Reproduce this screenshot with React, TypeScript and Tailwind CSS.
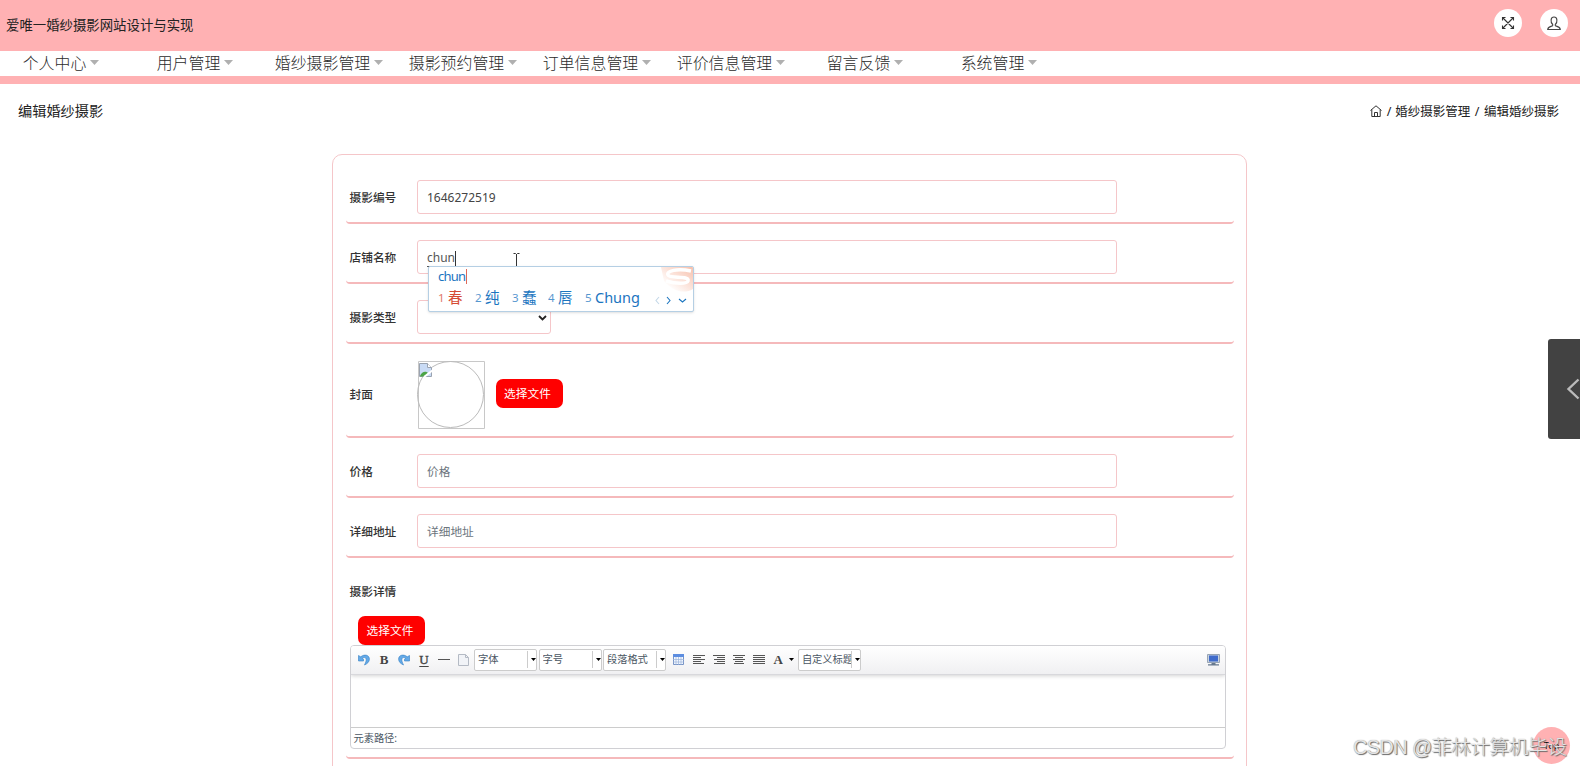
import React from "react";

const NAV = ["个人中心", "用户管理", "婚纱摄影管理", "摄影预约管理", "订单信息管理", "评价信息管理", "留言反馈", "系统管理"];

function Row({ label, className, children }: { label: string; className: string; children: React.ReactNode }) {
  return (
    <div className={`box-border flex rounded-[4px] border-b-2 border-[#f5b9bb] pb-[7px] pl-[3.500px] ${className}`}>
      <label className="w-[67.500px] shrink-0 self-center text-[11.700px] font-medium text-[#333]">{label}</label>
      {children}
    </div>
  );
}

function Field({ children, className = "" }: { children?: React.ReactNode; className?: string }) {
  return (
    <div className={`flex h-[34px] w-[700px] shrink-0 items-center rounded-[3px] border border-[#f5c6c9] bg-white pl-[9px] pr-[10px] pt-[2px] text-[12px] ${className}`}>
      {children}
    </div>
  );
}

function FileButton({ className = "" }: { className?: string }) {
  return (
    <button className={`h-[29px] w-[67px] shrink-0 rounded-[7px] bg-[#ff0000] pr-[3px] text-center text-[11.700px] leading-[29px] text-white ${className}`}>选择文件</button>
  );
}

function Combo({ text }: { text: string }) {
  return (
    <div className="mr-[1.500px] flex h-[22px] w-[63px] shrink-0 items-center rounded-[2px] border border-[#ccc] bg-white">
      <span className="ml-[3px] w-[49px] overflow-hidden whitespace-nowrap text-[10.300px] tracking-[-0.1px] text-[#4a5663]">{text}</span>
      <span className="h-[17px] w-px shrink-0 bg-[#ccc]" />
      <svg className="ml-[3px] shrink-0" width="5" height="3"><path d="M0 0h5L2.500 3z" fill="#000" /></svg>
    </div>
  );
}

function Lines({ d }: { d: string }) {
  return (
    <svg width="12" height="10" className="mr-[8px] shrink-0" shapeRendering="crispEdges">
      <path d={d} stroke="#555" strokeWidth="1" fill="none" />
    </svg>
  );
}

function Undo({ flip = false }: { flip?: boolean }) {
  return (
    <svg width="12" height="12" viewBox="0 0 12 12" className={flip ? "-scale-x-100" : ""}>
      <path d="M.5 1.500v5.500H5.500V5.200L4.300 4.600C5.500 3 8 3.200 8.200 5.500c.1 1.800-.7 3.200-1.700 5.500 3.300-1.500 5-3.500 4.900-6.200C11.200 1 6.500-.2 2.700 2.800z" fill="#64aae8" stroke="#347fc4" strokeWidth=".6" />
    </svg>
  );
}

function Candidate({ n, word, className }: { n: number; word: string; className: string }) {
  return (
    <span className={`flex shrink-0 items-center ${className}`}>
      <span className="w-[10px] text-[11.500px] opacity-75">{n}</span>
      <span className="text-[14.500px]">{word}</span>
    </span>
  );
}

function ImePopup() {
  return (
    <div className="absolute left-[11px] top-[26px] z-10 h-[46px] w-[266px] overflow-hidden rounded-[2px] border border-[#b5cfe4] bg-white text-[#1b75bf] shadow-sm">
      <svg className="absolute right-0 top-0" width="34" height="26" viewBox="0 0 34 26">
        <defs>
          <linearGradient id="flame" x1="0" y1="1" x2="1" y2="0">
            <stop offset="0.2" stopColor="#fff" />
            <stop offset="1" stopColor="#f7c0ac" />
          </linearGradient>
        </defs>
        <path d="M2 0h32v22C24 28 12 23 5 14z" fill="url(#flame)" />
        <path d="M32 4C18 1 7 4 9 8c2 4 22 0 20 6-1 3-12 3-22 0" fill="none" stroke="#fff" strokeWidth="3.500" />
      </svg>
      <div className="flex h-[18px] items-center pl-[9px]">
        <span className="text-[13px] leading-[18px] tracking-[-0.8px]">chun</span>
        <span className="ml-px h-[15px] w-px bg-[#e0695a]" />
      </div>
      <div className="flex h-[26px] items-center pl-[9px]">
        <Candidate n={1} word="春" className="w-[37px] text-[#d54b34]" />
        <Candidate n={2} word="纯" className="w-[37px]" />
        <Candidate n={3} word="蠢" className="w-[36px]" />
        <Candidate n={4} word="唇" className="w-[37px]" />
        <Candidate n={5} word="Chung" className="w-[69px]" />
        <svg width="34" height="10" viewBox="0 0 34 10" fill="none" stroke="#1b75bf" strokeWidth="1.100" className="mt-[3px] shrink-0">
          <path d="M5 2L2 5.500 5 9" stroke="#c4d8e8" />
          <path d="M13 2l3 3.500L13 9M25 4l3.500 3L32 4" />
        </svg>
      </div>
    </div>
  );
}

function Editor() {
  return (
    <div className="w-[876px] overflow-hidden rounded-[4px] border border-[#d0d0d4] bg-white">
      <div className="relative flex h-[29px] items-center border-b border-[#d8d8dc] bg-gradient-to-b from-white to-[#f0f0f2] pb-px pl-[7px] shadow-[0_1px_4px_rgba(0,0,0,0.18)]">
        <div className="mr-[4px] flex w-[112px] shrink-0 items-center gap-[8px] text-[#444]">
          <Undo />
          <span className="w-[12px] text-center font-['Liberation_Serif'] text-[13px] font-bold">B</span>
          <Undo flip />
          <span className="w-[12px] text-center font-['Liberation_Serif'] text-[13px] font-medium underline underline-offset-2 [-webkit-text-stroke:0.4px_#444]">U</span>
          <span className="h-px w-[12px] bg-[#555]" />
          <svg width="11" height="12" viewBox="0 0 11 12"><path d="M.5.5h7l3 3v8H.5z" fill="#f1f3f7" stroke="#b4bac4" /><path d="M7.500.5v3h3" fill="none" stroke="#b4bac4" /></svg>
        </div>
        <Combo text="字体" />
        <Combo text="字号" />
        <Combo text="段落格式" />
        <svg width="11" height="11" viewBox="0 0 11 11" className="ml-[5px] mr-[9px] shrink-0">
          <path d="M.5.500h10v10H.5z" fill="#f2f7ff" stroke="#7693c5" />
          <path d="M0 0h11v3H0z" fill="#5c8de0" />
          <path d="M0 5.500h11M0 8h11M3 3v8M5.500 3v8M8 3v8" stroke="#9bb3da" strokeWidth=".7" />
        </svg>
        <Lines d="M0 .5h12M0 2.500h8M0 4.500h12M0 6.500h8M0 8.500h11" />
        <Lines d="M0 .5h12M4 2.500h8M1 4.500h11M4 6.500h8M1 8.500h11" />
        <Lines d="M0 .5h12M2 2.500h8M0 4.500h12M2 6.500h8M1 8.500h10" />
        <Lines d="M0 .5h12M0 2.500h12M0 4.500h12M0 6.500h12M0 8.500h12" />
        <span className="ml-px font-['Liberation_Serif'] text-[13px] font-bold text-[#444]">A</span>
        <svg className="ml-[6px] mr-[4px] shrink-0" width="5" height="3"><path d="M0 0h5L2.500 3z" fill="#000" /></svg>
        <Combo text="自定义标题" />
        <svg width="13" height="12" viewBox="0 0 13 12" className="ml-auto mr-[5px] shrink-0">
          <path d="M.5.5h12v8H.5z" fill="#c9d3e0" stroke="#98a5b5" />
          <path d="M2 1.500h9v6H2z" fill="#3f6bcb" />
          <path d="M4.500 9h4v1.200H12v1.300H1v-1.300h3.500z" fill="#66788e" />
        </svg>
      </div>
      <div className="h-[52px]" />
      <div className="h-[21px] border-t border-[#ccc] pl-[2.500px] text-[10.300px] leading-[21px] tracking-[-0.1px] text-[#4a5663]">元素路径:</div>
    </div>
  );
}

export default function App() {
  return (
    <div className="relative h-[766px] w-[1580px] overflow-hidden bg-white font-['Noto_Sans','Noto_Sans_CJK_SC',sans-serif] text-[#222]">
      <header className="flex h-[51px] items-center bg-[#ffb1b3] pl-[6px] pr-[12px]">
        <h1 className="mb-px text-[13.400px]">爱唯一婚纱摄影网站设计与实现</h1>
        <div className="mb-[5px] ml-auto flex gap-[18px]">
          <span className="flex size-[28px] items-center justify-center rounded-full bg-white">
            <svg width="14" height="14" viewBox="0 0 14 14" fill="none" stroke="#333" strokeWidth="1.100"><path d="M1.500 1.500l11 11M12.500 1.500l-11 11M1.500 4.500v-3h3M9.500 1.500h3v3M12.500 9.500v3h-3M4.500 12.500h-3v-3" /></svg>
          </span>
          <span className="flex size-[28px] items-center justify-center rounded-full bg-white">
            <svg width="14" height="15" viewBox="0 0 14 15" fill="none" stroke="#444" strokeWidth="1.100"><path d="M5.700 8.500C3.200 6 3.500 1 7 1s3.800 5 1.300 7.500c-.3 1 .1 1.300 1.200 1.600 2.300.6 3.600 1.200 3.800 3.400H.7c.2-2.200 1.500-2.800 3.800-3.400 1.100-.3 1.500-.6 1.200-1.600z" /></svg>
          </span>
        </div>
      </header>
      <nav className="-ml-[6px] flex h-[25px] items-center">
        {NAV.map((t) => (
          <a key={t} className="mb-[2px] flex w-[134px] shrink-0 items-center justify-center whitespace-nowrap text-[15.900px] font-light leading-[24px] text-[#2b2b2b]">
            {t}
            <svg className="ml-[4px]" width="9" height="5"><path d="M0 0h9L4.500 5z" fill="#b0b0b0" /></svg>
          </a>
        ))}
      </nav>
      <div className="h-[8px] bg-[#ffb1b3]" />
      <div className="flex h-[70px] items-start justify-between pl-[18px] pr-[21px] pt-[16px]">
        <h2 className="text-[14.200px] leading-[22px]">编辑婚纱摄影</h2>
        <div className="mt-px flex items-center whitespace-pre text-[12.500px] leading-[22px]">
          <svg width="12" height="12" viewBox="0 0 12 12" fill="none" stroke="#333" className="mb-[2px] mr-[5px]"><path d="M.5 5.500L6 .8l5.500 4.700M1.800 4.500v7h8.400v-7M4.500 11.500v-4h3v4" /></svg>
          <span>/</span>
          <span className="ml-[4px]">婚纱摄影管理</span>
          <span className="mx-[4.500px]">/</span>
          <span>编辑婚纱摄影</span>
        </div>
      </div>
      <main className="ml-[332px] h-[640px] w-[915px] rounded-t-[10px] border border-[#f5c6c9] pl-[13px]">
        <div className="w-[888px]">
          <Row label="摄影编号" className="h-[69px] pt-[25px]"><Field className="text-[#444]">1646272519</Field></Row>
          <Row label="店铺名称" className="h-[60px] pt-[16px]">
            <div className="relative">
              <Field className="text-[#555]">
                <span className="border-b border-[#555] leading-[17px]">chun</span>
                <span className="h-[15px] w-px bg-[#333]" />
              </Field>
              <svg className="absolute left-[96px] top-[13px]" width="7" height="15" fill="none" stroke="#333"><path d="M.5.5h2l1 1 1-1h2M3.500 1v12M.5 14.500h2l1-1 1 1h2" /></svg>
              <ImePopup />
            </div>
          </Row>
          <Row label="摄影类型" className="h-[60px] pt-[16px]">
            <Field className="w-[134px]! justify-end px-[3.500px]!">
              <svg width="9" height="6" fill="none" stroke="#222" strokeWidth="1.800"><path d="M1 1l3.500 3.500L8 1" /></svg>
            </Field>
          </Row>
          <Row label="封面" className="h-[94px] pt-[17px]">
            <div className="relative h-[68px] w-[68px]">
              <svg width="68" height="68" fill="none" stroke="#bbb">
                <path d="M1.500.5h66v67h-66z" stroke="#c8c8c8" />
                <circle cx="33.500" cy="33.500" r="33" />
                <path d="M2.500 2.500h8l4 4v9h-12z" fill="#c9dbf5" stroke="#9aa3b0" />
                <path d="M3 15c2-5 6-5 8-3l-3 3.500H3z" fill="#4ba446" stroke="none" />
                <path d="M7 16l9-7" stroke="#fff" strokeWidth="2" />
                <path d="M10.500 2.500v4h4" fill="#fff" stroke="#9aa3b0" />
              </svg>
            </div>
            <FileButton className="ml-[10.500px] mt-[18px]" />
          </Row>
          <Row label="价格" className="h-[60px] pt-[16px]"><Field className="text-[11.700px]! text-[#6c757d]">价格</Field></Row>
          <Row label="详细地址" className="h-[60px] pt-[16px]"><Field className="text-[11.700px]! text-[#6c757d]">详细地址</Field></Row>
          <div className="h-[201px] rounded-[4px] border-b-2 border-[#f5b9bb] pl-[4px] pt-[24px]">
            <div className="-ml-[0.500px] h-[34px] text-[11.700px] font-medium leading-[19px] text-[#333]">摄影详情</div>
            <FileButton className="ml-[8px] block" />
            <Editor />
          </div>
        </div>
      </main>
      <aside className="absolute right-0 top-[339px] flex h-[100px] w-[32px] items-center justify-end rounded-l-[3px] bg-[#424242]">
        <svg width="14" height="22" fill="none" stroke="#bbb" strokeWidth="2.400"><path d="M12.500 1.500L2.500 11l10 9.500" /></svg>
      </aside>
      <div className="absolute left-[1533px] top-[727px] flex size-[37px] items-center justify-center rounded-full bg-[#ffb1b3] text-[9px] text-black">Top</div>
      <div className="absolute left-[1353px] top-[732px] whitespace-nowrap font-['Liberation_Sans','Noto_Sans_CJK_SC',sans-serif] text-[19.800px] font-light leading-[30px] tracking-[-0.500px] text-[#e4e4e4] [text-shadow:1px_1px_1px_#666,0_0_1px_#999]">CSDN @菲林计算机毕设</div>
    </div>
  );
}
